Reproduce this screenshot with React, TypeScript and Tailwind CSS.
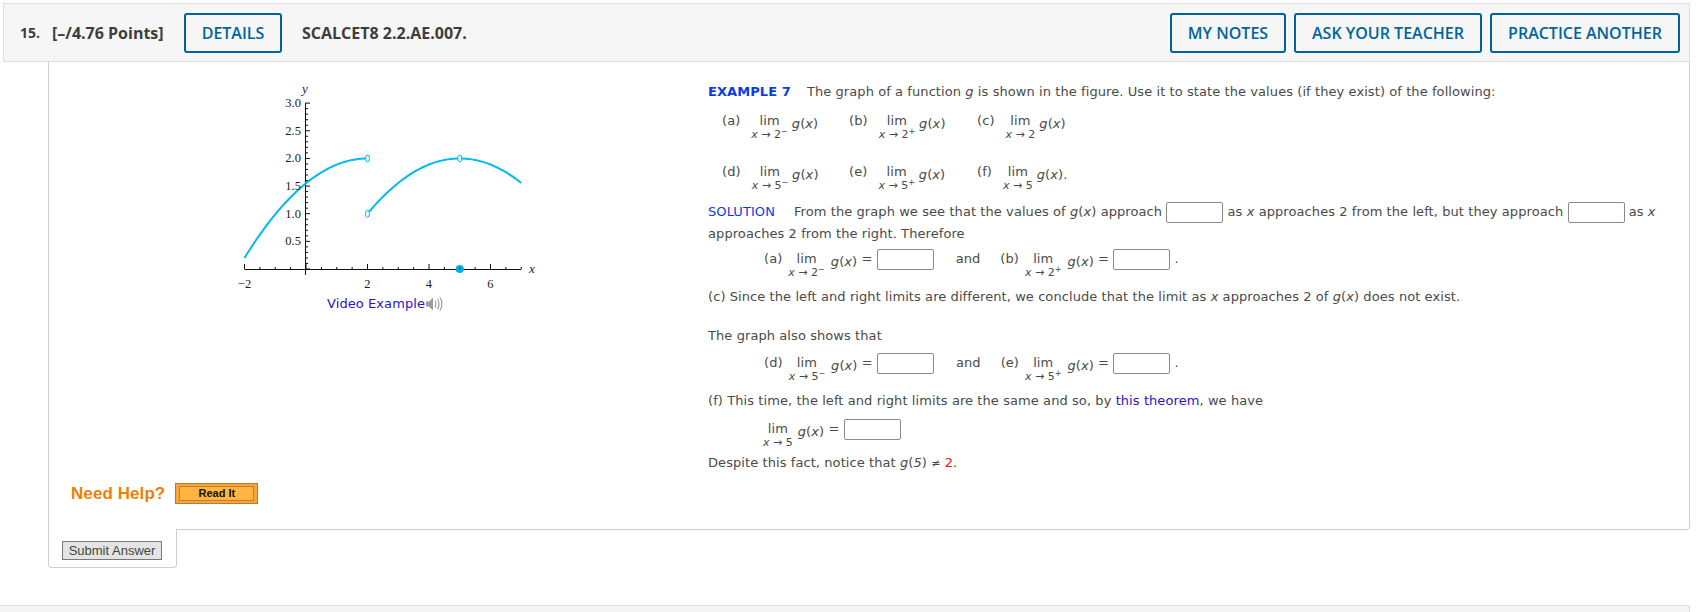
const Gx = ({ arg = "x" }: { arg?: string }) => (
  <span>
    <i>g</i>(<i>{arg}</i>)
  </span>
);

const LowGx = () => (
  <span className="relative top-[3px]">
    <Gx />
  </span>
);

const Lim = ({ to, sup, cls = "mx-[6px]" }: { to: string; sup?: string; cls?: string }) => (
  <span className={`inline-flex flex-col items-center align-baseline ${cls}`}>
    <span className="leading-[16px]">lim</span>
    <span className="text-[11px] leading-[11px] whitespace-nowrap tracking-normal">
      <i>x</i> → {to}
      {sup && <sup className="text-[8px] leading-none">{sup}</sup>}
    </span>
  </span>
);

const Box = ({ w = "w-[57px]" }: { w?: string }) => (
  <span className={`inline-block ${w} h-[21px] align-middle bg-white border border-[#8a8a8a] rounded-[2px]`} />
);

const NavButton = ({ label, w }: { label: string; w: string }) => (
  <button className={`${w} h-[40px] shrink-0 rounded-[3px] border-2 border-[#00649c] text-[#00649c] text-[16px] font-semibold`}>
    {label}
  </button>
);

const LimItem = ({ tag, to, sup, tail, w }: { tag: string; to: string; sup?: string; tail?: string; w: string }) => (
  <span className={`${w} shrink-0 whitespace-nowrap`}>
    ({tag})
    <Lim to={to} sup={sup} cls="ml-[11px] mr-[4px]" />
    <LowGx />
    {tail && <span className="relative top-[3px]">{tail}</span>}
  </span>
);

const Graph = () => {
  const px = (x: number) => 76 + x * 30.75;
  const py = (y: number) => 190 - y * 55.3;
  const xTicks = Array.from({ length: 19 }, (_, i) => -2 + i * 0.5);
  const yTicks = Array.from({ length: 31 }, (_, i) => i * 0.1);
  const left = Array.from({ length: 41 }, (_, i) => {
    const x = -2 + i * 0.1;
    return `${px(x)},${py(2 - 0.1125 * (x - 2) * (x - 2))}`;
  }).join(" ");
  const right = Array.from({ length: 51 }, (_, i) => {
    const x = 2 + i * 0.1;
    return `${px(x)},${py(2 - 0.1111 * (x - 5) * (x - 5))}`;
  }).join(" ");
  return (
    <svg width="320" height="220" viewBox="0 0 320 220" className="block">
      <g stroke="#111" strokeWidth="1">
        <line x1={px(-2)} y1="190.5" x2={px(7)} y2="190.5" />
        <line x1="75.5" y1={py(3)} x2="75.5" y2="196" />
        {xTicks.map((t) => (
          <line key={t} x1={px(t)} x2={px(t)} y1={t % 2 === 0 ? 185 : 188} y2="190" />
        ))}
        {yTicks.map((t, i) => (
          <line key={t} x1="75" x2={i % 5 === 0 ? 80 : 78} y1={py(t)} y2={py(t)} />
        ))}
      </g>
      <polyline points={left} fill="none" stroke="#00b9f0" strokeWidth="2" />
      <polyline points={right} fill="none" stroke="#00b9f0" strokeWidth="2" />
      <ellipse cx={px(2)} cy={py(2)} rx="2" ry="3.5" fill="white" stroke="#00b9f0" />
      <ellipse cx={px(2)} cy={py(1)} rx="2" ry="3.5" fill="white" stroke="#00b9f0" />
      <ellipse cx={px(5)} cy={py(2)} rx="2" ry="3.5" fill="white" stroke="#00b9f0" />
      <circle cx={px(5)} cy="190" r="4" fill="#00aeea" />
      <line x1={px(5)} x2={px(5)} y1="188" y2="191" stroke="#0a3a5a" />
      <g fontFamily="'Liberation Serif', serif" fontSize="12.5" fill="#222">
        {["3.0", "2.5", "2.0", "1.5", "1.0", "0.5"].map((t) => (
          <text key={t} x="71" y={py(Number(t)) + 4} textAnchor="end">
            {t}
          </text>
        ))}
        <text x={px(-2)} y="209" textAnchor="middle">−2</text>
        <text x={px(2)} y="209" textAnchor="middle">2</text>
        <text x={px(4)} y="209" textAnchor="middle">4</text>
        <text x={px(6)} y="209" textAnchor="middle">6</text>
        <text x="72" y="14" fontStyle="italic" fontSize="13">y</text>
        <text x="299" y="194" fontStyle="italic" fontSize="13">x</text>
      </g>
    </svg>
  );
};

const Speaker = () => (
  <svg width="18" height="18" viewBox="0 0 18 18" fill="none" className="shrink-0">
    <path d="M1 6.5h3L8 2.5v13l-4-4H1z" fill="#9c9c9c" />
    <path d="M10 5.5c1.2 2.2 1.2 4.8 0 7M12.5 4c1.8 3 1.8 7 0 10M15 2.5c2.4 4 2.4 9 0 13" stroke="#9c9c9c" strokeWidth="1.2" />
  </svg>
);

export default function App() {
  return (
    <div className="w-[1703px] h-[612px] bg-white overflow-hidden flex flex-col">
      <div className="ml-[3px] mr-[13px] mt-[3px] flex flex-col">
        <header className="h-[59px] flex items-center bg-[#f6f6f6] border border-[#dedede] pl-[16px] pr-[9px] text-[#3d3d3d]" style={{ fontFamily: "'Open Sans', sans-serif" }}>
          <span className="text-[14px] font-bold w-[32px]">15.</span>
          <span className="text-[16px] font-bold w-[132px]">[–/4.76 Points]</span>
          <NavButton label="DETAILS" w="w-[98px]" />
          <span className="ml-[20px] text-[16px] font-bold">SCALCET8 2.2.AE.007.</span>
          <div className="ml-auto flex gap-[8px]">
            <NavButton label="MY NOTES" w="w-[116px]" />
            <NavButton label="ASK YOUR TEACHER" w="w-[188px]" />
            <NavButton label="PRACTICE ANOTHER" w="w-[190px]" />
          </div>
        </header>

        <div className="ml-[45px] h-[468px] flex border-l border-r border-b border-[#cfcfcf] rounded-br-[4px] text-[13px] tracking-[0.08px] text-[#4a4a4a]" style={{ fontFamily: "'DejaVu Sans', Verdana, sans-serif" }}>
          <div className="w-[659px] shrink-0 flex flex-col">
            <div className="ml-[181px] mt-[17px]">
              <Graph />
            </div>
            <div className="ml-[278px] -mt-[5px] flex items-center text-[#2a14c8]">
              Video Example
              <Speaker />
            </div>
            <div className="mt-[167px] ml-[22px] flex items-center gap-[10px]">
              <span className="text-[17px] font-bold text-[#ee7f00]" style={{ fontFamily: "'Liberation Sans', sans-serif" }}>Need Help?</span>
              <button className="w-[83px] h-[21px] px-[3px] py-[2px] bg-[#f9a33c] border border-[#b87a30]">
                <span className="h-full flex items-center justify-center bg-[#ffb53f] border border-[#c08030] text-[11px] font-bold tracking-normal text-[#111]" style={{ fontFamily: "'Liberation Sans', sans-serif" }}>Read It</span>
              </button>
            </div>
          </div>

          <div className="flex-1 min-w-0 pt-[22px]">
            <p className="leading-[16px] whitespace-nowrap">
              <b className="text-[#0a3ce6] font-bold mr-[16px]">EXAMPLE 7</b>
              The graph of a function <i>g</i> is shown in the figure. Use it to state the values (if they exist) of the following:
            </p>
            <div className="mt-[13px] ml-[14px] flex leading-[16px]">
              <LimItem tag="a" to="2" sup="−" w="w-[127px]" />
              <LimItem tag="b" to="2" sup="+" w="w-[128px]" />
              <LimItem tag="c" to="2" w="w-[120px]" />
            </div>
            <div className="mt-[24px] ml-[14px] flex leading-[16px]">
              <LimItem tag="d" to="5" sup="−" w="w-[127px]" />
              <LimItem tag="e" to="5" sup="+" w="w-[128px]" />
              <LimItem tag="f" to="5" tail="." w="w-[120px]" />
            </div>
            <p className="mt-[10px] leading-[22px] whitespace-nowrap">
              <span className="text-[#0a3ce6] mr-[19px]">SOLUTION</span>
              From the graph we see that the values of <Gx /> approach <Box /> as <i>x</i> approaches 2 from the left, but they approach <Box /> as <i>x</i>
              <br />
              approaches 2 from the right. Therefore
            </p>
            <div className="mt-[3px] ml-[56px] leading-[21px] whitespace-nowrap">
              (a)
              <Lim to="2" sup="−" />
              <LowGx /> = <Box />
              <span className="ml-[22px]">and</span>
              <span className="ml-[20px]">(b)</span>
              <Lim to="2" sup="+" />
              <LowGx /> = <Box /> .
            </div>
            <p className="mt-[11px] leading-[16px] whitespace-nowrap">
              (c) Since the left and right limits are different, we conclude that the limit as <i>x</i> approaches 2 of <Gx /> does not exist.
            </p>
            <p className="mt-[23px] leading-[16px]">The graph also shows that</p>
            <div className="mt-[8px] ml-[56px] leading-[21px] whitespace-nowrap">
              (d)
              <Lim to="5" sup="−" />
              <LowGx /> = <Box />
              <span className="ml-[22px]">and</span>
              <span className="ml-[20px]">(e)</span>
              <Lim to="5" sup="+" />
              <LowGx /> = <Box /> .
            </div>
            <p className="mt-[11px] leading-[16px] whitespace-nowrap">
              (f) This time, the left and right limits are the same and so, by <span className="text-[#2a14c8]">this theorem</span>, we have
            </p>
            <div className="mt-[9px] ml-[49px] leading-[21px] whitespace-nowrap">
              <Lim to="5" cls="ml-[6px] mr-[5px]" />
              <LowGx /> = <Box />
            </div>
            <p className="mt-[7px] leading-[16px] whitespace-nowrap">
              Despite this fact, notice that <Gx arg="5" /> <span className="text-[11px]">≠</span> <span className="text-[#f01010]">2</span>.
            </p>
          </div>
        </div>

        <div className="ml-[45px] -mt-px w-[129px] h-[39px] bg-white border-l border-r border-b border-[#cfcfcf] rounded-b-[4px] pl-[13px] pt-[12px]">
          <button className="block w-[100px] h-[19px] bg-[#e4e4e4] border border-[#777] text-[13px] leading-[16px] text-[#444]" style={{ fontFamily: "'Liberation Sans', sans-serif" }}>
            Submit Answer
          </button>
        </div>
      </div>
      <div className="mt-[37px] mr-[13px] flex-1 bg-[#f5f5f5] border-t border-r border-[#dedede] rounded-tr-[3px]" />
    </div>
  );
}
